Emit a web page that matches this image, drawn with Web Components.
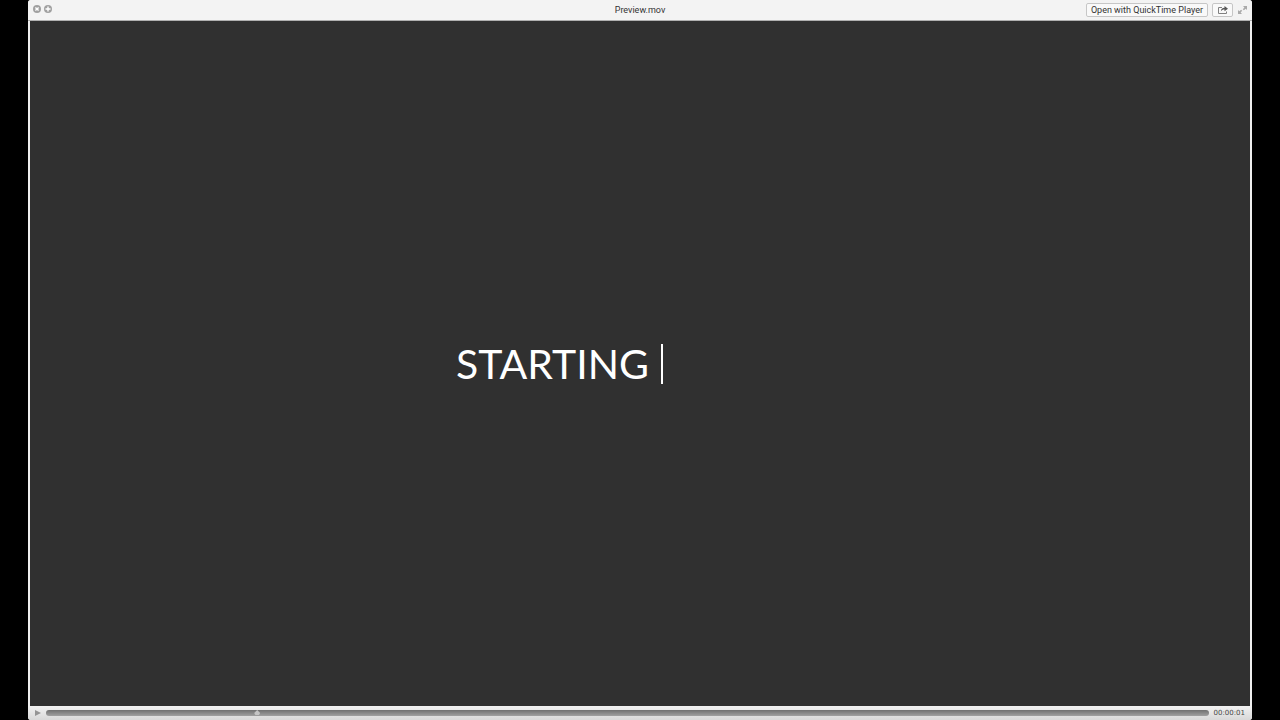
<!DOCTYPE html>
<html lang="en">
<head>
<meta charset="utf-8">
<title>Preview.mov</title>
<style>
html, body { margin: 0; height: 100%; background: #000; }
body { font-family: Roboto, "Open Sans", sans-serif; }
</style>
</head>
<body>
<quick-look-window>
  <title-bar slot="title">Preview.mov</title-bar>
  <video-stage slot="stage">STARTING</video-stage>
  <playback-bar slot="controls" position="18" time="00:00:01"></playback-bar>
</quick-look-window>
<script>
class BaseElement extends HTMLElement {
  connectedCallback() {
    if (!this.shadowRoot) this.attachShadow({ mode: "open" }).innerHTML = this.render();
  }
}

customElements.define("quick-look-window", class extends BaseElement {
  render() {
    return `<style>
      :host { display: block; height: 100vh; padding: 0 28px; box-sizing: border-box; }
      section { display: flex; flex-direction: column; height: 100%; background: #f0f0f0; border-radius: 3px; overflow: hidden; }
      ::slotted([slot="stage"]) { flex: 1; margin: 0 2px; }
    </style>
    <section><slot name="title"></slot><slot name="stage"></slot><slot name="controls"></slot></section>`;
  }
});

customElements.define("title-bar", class extends BaseElement {
  render() {
    return `<style>
      :host { display: block; background: #f3f3f3; border-bottom: 1px solid #b0b0b0; }
      header { display: grid; grid-template-columns: 1fr auto 1fr; height: 20px; align-items: center; padding: 0 4px; }
      h1 { margin: 0; font-size: 9px; line-height: 12px; font-weight: 400; color: #333; }
      .group { display: flex; align-items: center; }
      .left { gap: 1px; align-self: start; padding-top: 4px; }
      .right { justify-content: flex-end; gap: 4px; }
      button { display: flex; align-items: center; justify-content: center; margin: 0; padding: 0; border: 0; background: none; font: inherit; color: #333; }
      .left button { width: 10px; height: 10px; }
      .boxed { height: 14px; box-sizing: border-box; border: 1px solid #c6c6c6; border-radius: 2px; background: #f9f9f9; font-size: 9px; line-height: 12px; }
      .open { padding: 0 4px; white-space: nowrap; }
      .share { width: 21px; }
      svg { display: block; }
    </style>
    <header>
      <div class="group left">
        <button aria-label="Close"><svg width="10" height="10" viewBox="0 0 10 10"><circle cx="5" cy="5" r="4" fill="#a0a0a0"/><path d="M3.4 3.4 6.6 6.6M6.6 3.4 3.4 6.6" stroke="#fff" stroke-width="1.4"/></svg></button>
        <button aria-label="Zoom"><svg width="10" height="10" viewBox="0 0 10 10"><circle cx="5" cy="5" r="4" fill="#a0a0a0"/><path d="M5 2.5V7.5M2.5 5H7.5" stroke="#fff" stroke-width="1.4"/></svg></button>
      </div>
      <h1><slot></slot></h1>
      <div class="group right">
        <button class="boxed open">Open with QuickTime Player</button>
        <button class="boxed share" aria-label="Share"><svg width="12" height="10" viewBox="0 0 12 10"><path d="M5 2.5H1.5V8.5H9.5V6.5" fill="none" stroke="#808080"/><path d="M3.8 6.5C4 4 5.3 2.9 7.500 2.8V1L11 3.7 7.500 6.3V4.5C5.8 4.5 4.7 5.1 3.8 6.5Z" fill="#585858"/></svg></button>
        <button aria-label="Full screen"><svg width="11" height="10" viewBox="0 0 11 10"><path d="M6 1H10V5L8.700 3.700 6.900 5.300 5.800 4.200 7.400 2.400ZM5 9H1V5L2.300 6.300 4.100 4.700 5.200 5.800 3.600 7.600Z" fill="#aaa"/></svg></button>
      </div>
    </header>`;
  }
});

customElements.define("video-stage", class extends BaseElement {
  render() {
    return `<style>
      :host { display: flex; align-items: center; min-height: 0; box-sizing: border-box; padding-left: 34.8%; background: #303030; color: #fff; }
      .caption { display: flex; align-items: center; gap: 12px; font-family: Lato, sans-serif; font-size: 41px; line-height: 48px; }
      .caret { width: 2px; height: 40px; background: #fff; }
    </style>
    <div class="caption"><span><slot></slot></span><span class="caret"></span></div>`;
  }
});

customElements.define("playback-bar", class extends BaseElement {
  render() {
    return `<style>
      :host { display: block; background: linear-gradient(#f2f2f2, #d8d8d8); }
      div { display: flex; align-items: center; height: 14px; padding: 0 7px 0 5px; }
      button { display: flex; flex: none; margin: 0; padding: 0; border: 0; background: none; width: 10px; height: 10px; }
      input { -webkit-appearance: none; appearance: none; flex: 1; min-width: 0; margin: 0 5px 0 3px; height: 6px; border-radius: 3px; background: linear-gradient(#707070, #a0a0a0); }
      input::-webkit-slider-thumb { -webkit-appearance: none; width: 6px; height: 6px; background: #c4c4c4; clip-path: polygon(50% 0, 100% 50%, 80% 85%, 20% 85%, 0 50%); }
      time { font-family: "DejaVu Sans", sans-serif; font-size: 7px; line-height: 12px; color: #444; }
    </style>
    <div>
      <button aria-label="Play"><svg width="10" height="10" viewBox="0 0 10 10"><path d="M2 2 8 5 2 8Z" fill="#959595"/></svg></button>
      <input type="range" min="0" max="100" value="${this.getAttribute("position")}" aria-label="Playback position">
      <time>${this.getAttribute("time")}</time>
    </div>`;
  }
});
</script>
</body>
</html>
